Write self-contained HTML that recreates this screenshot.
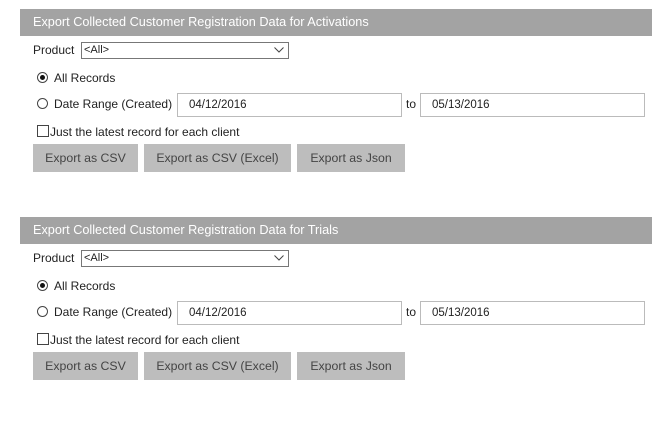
<!DOCTYPE html>
<html><head><style>
*{margin:0;padding:0;box-sizing:border-box}
body{width:652px;height:425px;background:#fff;position:relative;font-family:"Liberation Sans",sans-serif;color:#222;overflow:hidden}
.s{position:absolute;left:0;width:652px;height:200px}
.a{position:absolute;white-space:nowrap}
.hd{left:20px;top:9px;width:632px;height:27px;background:#a3a3a3;color:#fff;font-size:12.7px;line-height:27px;padding-left:13px}
.lbl{font-size:12px}
.sel{left:81px;top:42px;width:208px;height:17px;border:1px solid #777;font-size:11px;line-height:15px;padding-left:2px}
.inp{height:24px;border:1px solid #bbb;font-size:11.5px;line-height:22px;padding-left:11px}
.btn{top:144px;height:28px;background:#bdbdbd;color:#444;font-size:12.3px;line-height:28px;text-align:center}
.rad{width:11px;height:11px;border:1px solid #444;border-radius:50%}
.chk{width:12px;height:12px;border:1px solid #444}
</style></head><body>
<div class="s" style="top:0">
<div class="a hd">Export Collected Customer Registration Data for Activations</div>
<div class="a lbl" style="left:33px;top:43px">Product</div>
<div class="a sel">&lt;All&gt;<svg style="position:absolute;right:4px;top:4px" width="10" height="6"><path d="M0.5 0.5 L5 5 L9.5 0.5" stroke="#444" fill="none"/></svg></div>
<div class="a rad" style="left:37px;top:72px"><div style="width:5px;height:5px;background:#111;border-radius:50%;margin:2px"></div></div>
<div class="a lbl" style="left:54px;top:71px">All Records</div>
<div class="a rad" style="left:37px;top:98px"></div>
<div class="a lbl" style="left:54px;top:97px">Date Range (Created)</div>
<div class="a inp" style="left:177px;top:93px;width:225px">04/12/2016</div>
<div class="a lbl" style="left:406px;top:97px">to</div>
<div class="a inp" style="left:420px;top:93px;width:225px">05/13/2016</div>
<div class="a chk" style="left:37px;top:125px"></div>
<div class="a lbl" style="left:50px;top:125px">Just the latest record for each client</div>
<div class="a btn" style="left:33px;width:105px">Export as CSV</div>
<div class="a btn" style="left:144px;width:147px">Export as CSV (Excel)</div>
<div class="a btn" style="left:297px;width:108px">Export as Json</div>
</div>
<div class="s" style="top:208px">
<div class="a hd">Export Collected Customer Registration Data for Trials</div>
<div class="a lbl" style="left:33px;top:43px">Product</div>
<div class="a sel">&lt;All&gt;<svg style="position:absolute;right:4px;top:4px" width="10" height="6"><path d="M0.5 0.5 L5 5 L9.5 0.5" stroke="#444" fill="none"/></svg></div>
<div class="a rad" style="left:37px;top:72px"><div style="width:5px;height:5px;background:#111;border-radius:50%;margin:2px"></div></div>
<div class="a lbl" style="left:54px;top:71px">All Records</div>
<div class="a rad" style="left:37px;top:98px"></div>
<div class="a lbl" style="left:54px;top:97px">Date Range (Created)</div>
<div class="a inp" style="left:177px;top:93px;width:225px">04/12/2016</div>
<div class="a lbl" style="left:406px;top:97px">to</div>
<div class="a inp" style="left:420px;top:93px;width:225px">05/13/2016</div>
<div class="a chk" style="left:37px;top:125px"></div>
<div class="a lbl" style="left:50px;top:125px">Just the latest record for each client</div>
<div class="a btn" style="left:33px;width:105px">Export as CSV</div>
<div class="a btn" style="left:144px;width:147px">Export as CSV (Excel)</div>
<div class="a btn" style="left:297px;width:108px">Export as Json</div>
</div>
</body></html>
